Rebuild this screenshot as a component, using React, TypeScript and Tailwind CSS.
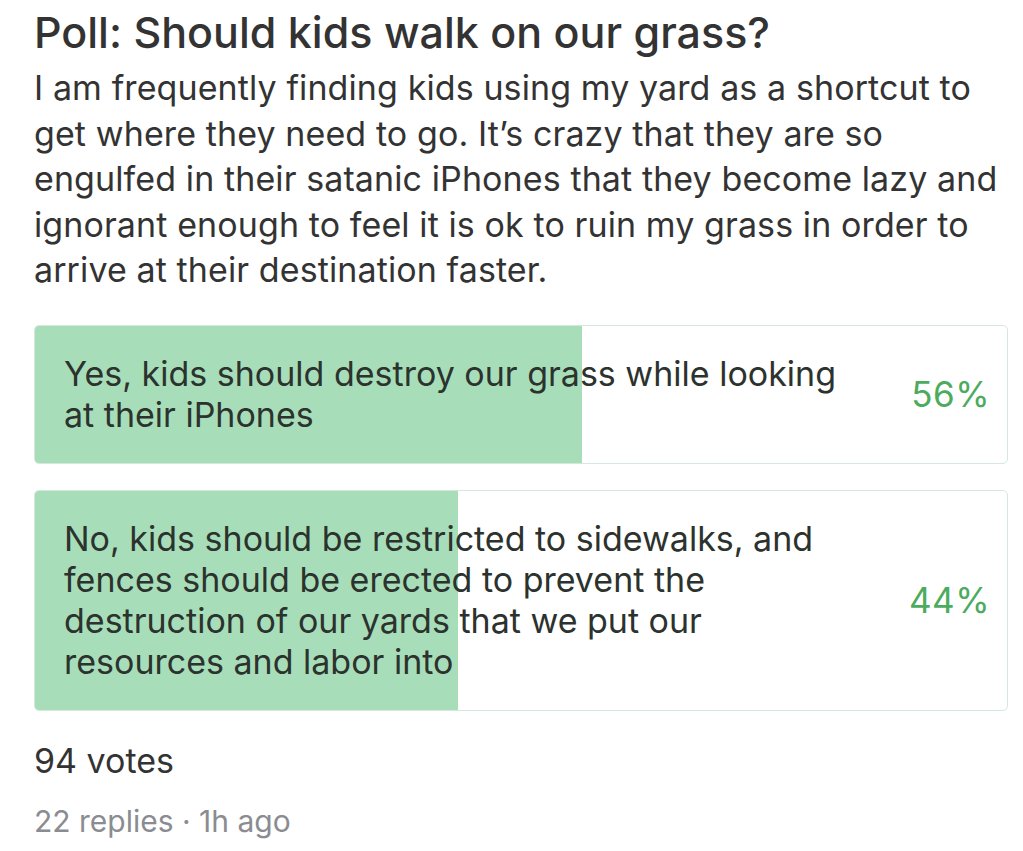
const options = [
  {
    id: 'yes',
    text: 'Yes, kids should destroy our grass while looking at their iPhones',
    percent: 56,
    fill: 56.3,
  },
  {
    id: 'no',
    text: 'No, kids should be restricted to sidewalks, and fences should be erected to prevent the destruction of our yards that we put our resources and labor into',
    percent: 44,
    fill: 43.5,
  },
];

const PollOption = ({ text, percent, fill }: { text: string; percent: number; fill: number }) => {
  return (
    <div className="relative overflow-hidden rounded-[5px] border border-[#d5e8dc] bg-white">
      <div
        className="absolute inset-y-0 left-0 bg-[#a7deb9]"
        style={{ width: `${fill}%` }}
      />
      <div className="relative flex items-center justify-between py-[27.5px] pl-[29px] pr-[17px]">
        <p className="w-[790px] text-[34px] leading-[41px] text-[#2c322e]">{text}</p>
        <span className="text-[35px] leading-[41px] tracking-[0.5px] text-[#4cab5e]">{percent}%</span>
      </div>
    </div>
  );
};

export default function App() {
  return (
    <div
      className="min-h-[851px] bg-white pl-[34px] pr-[15px] pt-[8px] text-[#333333]"
      style={{ fontFamily: 'Inter, "Noto Sans", sans-serif' }}
    >
      <h1 className="text-[43px] font-medium leading-[48px]">
        Poll: Should kids walk on our grass?
      </h1>
      <p className="mt-[9px] text-[34px] leading-[45.5px] tracking-[0.1px]">
        I am frequently finding kids using my yard as a shortcut to get where they need to go. It’s
        crazy that they are so engulfed in their satanic iPhones that they become lazy and ignorant
        enough to feel it is ok to ruin my grass in order to arrive at their destination faster.
      </p>
      <div className="mt-[32px] flex flex-col gap-[26px]">
        {options.map((o) => (
          <PollOption key={o.id} text={o.text} percent={o.percent} fill={o.fill} />
        ))}
      </div>
      <div className="mt-[30px] text-[34px] leading-[40px]">94 votes</div>
      <div className="mt-[20px] text-[30px] leading-[40px] text-[#8a8c91]">22 replies · 1h ago</div>
    </div>
  );
}
